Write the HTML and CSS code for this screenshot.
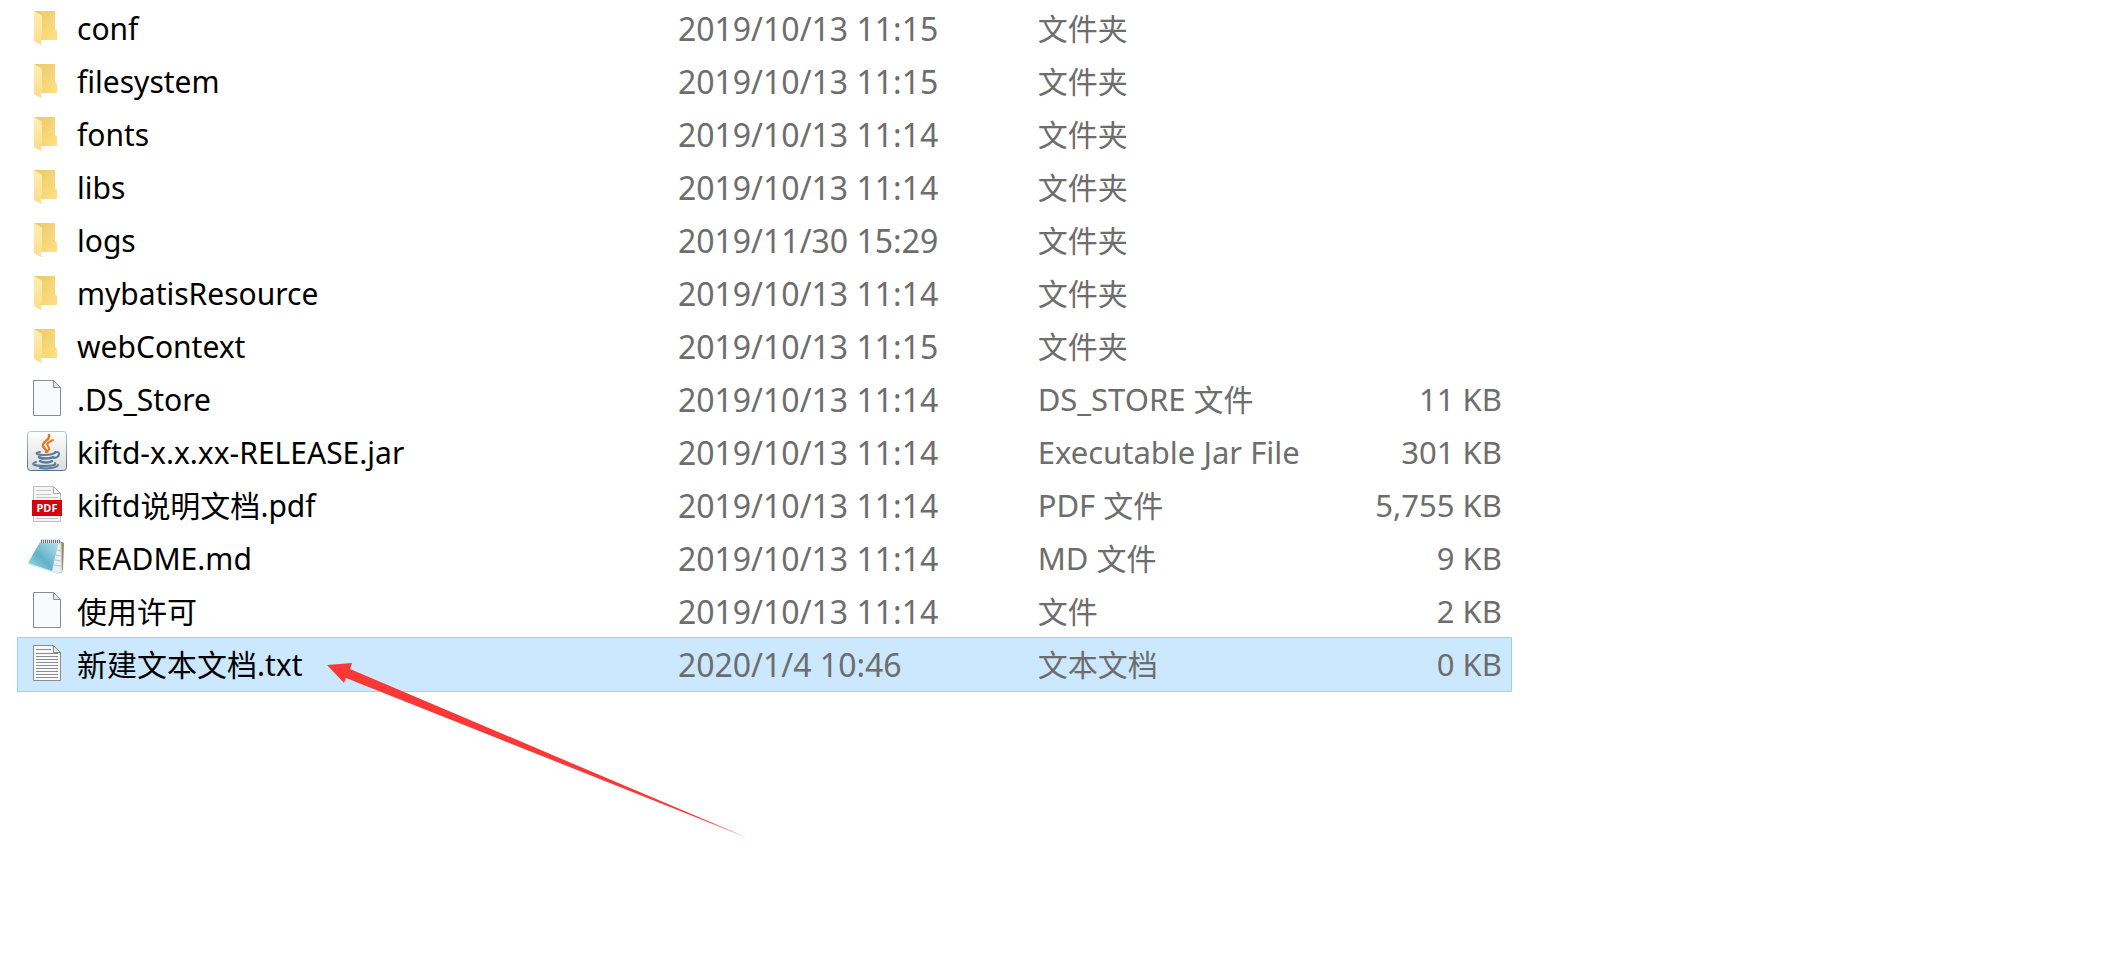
FILE: index.html
```html
<!DOCTYPE html>
<html lang="zh-CN">
<head>
    <meta charset="UTF-8">
    <title>kiftd</title>
    <link rel="stylesheet" href="styles.css">
</head>
<body>
    <!-- 图标定义 -->
    <svg class="icon-defs" aria-hidden="true">
        <defs>
            <linearGradient id="folder-back" x1="0" y1="0" x2="1" y2="1">
                <stop offset="0" stop-color="#e9c866"/>
                <stop offset="1" stop-color="#ffe083"/>
            </linearGradient>
            <linearGradient id="folder-front" x1="0" y1="0" x2="0" y2="1">
                <stop offset="0" stop-color="#ffeeb4"/>
                <stop offset="1" stop-color="#fbdd88"/>
            </linearGradient>
            <linearGradient id="jar-bg" x1="0" y1="0" x2="0" y2="1">
                <stop offset="0" stop-color="#ffffff"/>
                <stop offset="1" stop-color="#dcdcdc"/>
            </linearGradient>
            <linearGradient id="jar-edge" x1="0" y1="0" x2="0" y2="1">
                <stop offset="0" stop-color="#b4c4d2"/>
                <stop offset="1" stop-color="#52708c"/>
            </linearGradient>
            <linearGradient id="pad-cover" x1="0" y1="1" x2="1" y2="0">
                <stop offset="0" stop-color="#a5dce8"/>
                <stop offset="0.45" stop-color="#5fb2c8"/>
                <stop offset="1" stop-color="#b9e2ea"/>
            </linearGradient>
        </defs>
        <symbol id="icon-folder" viewBox="0 0 40 40">
            <path fill="url(#folder-back)" d="M7 4h21v18l2 2v9H14L7 30z"/>
            <path fill="url(#folder-front)" d="M7 4l7 4c1 1 1 1 1 3v18l-1 2v7L7 34z"/>
            <path fill="#f0ede4" d="M14 36l3 2h-3z"/>
        </symbol>
        <symbol id="icon-file" viewBox="0 0 40 40">
            <path fill="#f9fafb" stroke="#8b8b8b" d="M6.500 2.500h20l7 7v28h-27z"/>
            <path fill="#e6e8ea" stroke="#8b8b8b" d="M26.500 2.500v7h7z"/>
        </symbol>
        <symbol id="icon-jar" viewBox="0 0 40 40">
            <rect x="0.500" y="0.500" width="39" height="39" rx="3" fill="url(#jar-bg)" stroke="url(#jar-edge)"/>
            <g fill="none" stroke-linecap="round">
                <path stroke="#e87722" stroke-width="2.500" d="M22 4c2 5-7 6-6 11 1 3 4 3 3 6"/>
                <path stroke="#e87722" stroke-width="2" d="M26 9c-5 2-7 4-5 6 2 3 1 4-1 6"/>
                <path stroke="#5a7c98" stroke-width="2" d="M13 21c-6 1-4 3 5 3 5 0 8-1 10-2M28 21c6-1 5 5-1 6"/>
                <path stroke="#5a7c98" stroke-width="2.500" d="M12 26c2 2 11 2 14 0M13 30c3 2 9 2 12 0"/>
                <path stroke="#5a7c98" stroke-width="2" d="M9 31c-6 2-2 4 8 4 8 0 13-1 11-3M13 37c8 1 17 0 18-3"/>
            </g>
        </symbol>
        <symbol id="icon-notepad" viewBox="0 0 40 40">
            <path fill="#a5824a" d="M33 4l4 2-1 27-4 2z"/>
            <path fill="#e9f0f4" stroke="#b9c5cc" d="M31 6l3 0 1 29-3 1-8-2z"/>
            <path stroke="#b9c5cc" d="M30 13l4 1M29 18l5 1M28 23l6 1M27 28l7 1"/>
            <path fill="#dfe9ee" d="M1 26l1 2 29 9 2-1-8-3z"/>
            <path fill="url(#pad-cover)" d="M13 5l18 1-6 28L1 26z"/>
            <path fill="#dde3e5" d="M14 2h19l1 4-21 0z"/>
            <path stroke="#6d7274" stroke-dasharray="1 1" stroke-width="3" d="M14 4.500h19"/>
        </symbol>
        <symbol id="icon-text" viewBox="0 0 40 40">
            <path fill="#f9fafb" stroke="#8b8b8b" d="M6.500 2.500h20l7 7v28h-27z"/>
            <path fill="#e6e8ea" stroke="#8b8b8b" d="M26.500 2.500v7h7z"/>
            <path stroke="#8b8b8b" d="M9 6.500h15M9 10.500h22M9 13.500h22M9 16.500h22M9 19.500h22M9 22.500h22M9 25.500h22M9 28.500h22M9 31.500h22M9 34.500h22"/>
        </symbol>
    </svg>

    <main class="explorer">
        <table class="file-list">
            <colgroup>
                <col class="col-name">
                <col class="col-date">
                <col class="col-type">
                <col class="col-size">
            </colgroup>
            <tbody>
                <tr>
                    <td><div class="file"><svg class="icon"><use href="#icon-folder"/></svg><span>conf</span></div></td>
                    <td>2019/10/13 11:15</td>
                    <td><span class="zh">文件夹</span></td>
                    <td></td>
                </tr>
                <tr>
                    <td><div class="file"><svg class="icon"><use href="#icon-folder"/></svg><span>filesystem</span></div></td>
                    <td>2019/10/13 11:15</td>
                    <td><span class="zh">文件夹</span></td>
                    <td></td>
                </tr>
                <tr>
                    <td><div class="file"><svg class="icon"><use href="#icon-folder"/></svg><span>fonts</span></div></td>
                    <td>2019/10/13 11:14</td>
                    <td><span class="zh">文件夹</span></td>
                    <td></td>
                </tr>
                <tr>
                    <td><div class="file"><svg class="icon"><use href="#icon-folder"/></svg><span>libs</span></div></td>
                    <td>2019/10/13 11:14</td>
                    <td><span class="zh">文件夹</span></td>
                    <td></td>
                </tr>
                <tr>
                    <td><div class="file"><svg class="icon"><use href="#icon-folder"/></svg><span>logs</span></div></td>
                    <td>2019/11/30 15:29</td>
                    <td><span class="zh">文件夹</span></td>
                    <td></td>
                </tr>
                <tr>
                    <td><div class="file"><svg class="icon"><use href="#icon-folder"/></svg><span>mybatisResource</span></div></td>
                    <td>2019/10/13 11:14</td>
                    <td><span class="zh">文件夹</span></td>
                    <td></td>
                </tr>
                <tr>
                    <td><div class="file"><svg class="icon"><use href="#icon-folder"/></svg><span>webContext</span></div></td>
                    <td>2019/10/13 11:15</td>
                    <td><span class="zh">文件夹</span></td>
                    <td></td>
                </tr>
                <tr>
                    <td><div class="file"><svg class="icon"><use href="#icon-file"/></svg><span>.DS_Store</span></div></td>
                    <td>2019/10/13 11:14</td>
                    <td>DS_STORE <span class="zh">文件</span></td>
                    <td>11 KB</td>
                </tr>
                <tr>
                    <td><div class="file"><svg class="icon"><use href="#icon-jar"/></svg><span>kiftd-x.x.xx-RELEASE.jar</span></div></td>
                    <td>2019/10/13 11:14</td>
                    <td>Executable Jar File</td>
                    <td>301 KB</td>
                </tr>
                <tr>
                    <td>
                        <div class="file">
                            <svg class="icon" viewBox="0 0 40 40">
                                <path fill="#f6f6f6" stroke="#bdbdbd" d="M6.500 2.500h20l7 7v28h-27z"/>
                                <path fill="#fff" stroke="#a8a8a8" d="M26.500 2.500v7h7z"/>
                                <path stroke="#c4c4c4" d="M9 6.500h15M9 10.500h15M9 13.500h22M9 34.500h22"/>
                                <path fill="#d9000d" d="M5 16h30v16H5z"/>
                                <text class="pdf-label" x="20" y="28" text-anchor="middle">PDF</text>
                            </svg>
                            <span>kiftd<span class="zh">说明文档</span>.pdf</span>
                        </div>
                    </td>
                    <td>2019/10/13 11:14</td>
                    <td>PDF <span class="zh">文件</span></td>
                    <td>5,755 KB</td>
                </tr>
                <tr>
                    <td><div class="file"><svg class="icon"><use href="#icon-notepad"/></svg><span>README.md</span></div></td>
                    <td>2019/10/13 11:14</td>
                    <td>MD <span class="zh">文件</span></td>
                    <td>9 KB</td>
                </tr>
                <tr>
                    <td><div class="file"><svg class="icon"><use href="#icon-file"/></svg><span><span class="zh">使用许可</span></span></div></td>
                    <td>2019/10/13 11:14</td>
                    <td><span class="zh">文件</span></td>
                    <td>2 KB</td>
                </tr>
                <tr class="selected">
                    <td><div class="file"><svg class="icon"><use href="#icon-text"/></svg><span><span class="zh">新建文本文档</span>.txt</span></div></td>
                    <td>2020/1/4 10:46</td>
                    <td><span class="zh">文本文档</span></td>
                    <td>0 KB</td>
                </tr>
            </tbody>
        </table>
        <svg class="arrow" viewBox="0 0 422 176" aria-hidden="true">
            <path d="M0 2l25-2-2 6L421 175 19 15l-2 5z"/>
        </svg>
    </main>
</body>
</html>
```

FILE: styles.css
```css
* {
    margin: 0;
    padding: 0;
    box-sizing: border-box;
}

body {
    background: #fff;
    color: #000;
    font-family: "Noto Sans", "Noto Sans CJK SC", sans-serif;
    font-size: 31px;
}

.icon-defs {
    position: absolute;
    width: 0;
    height: 0;
}

.explorer {
    position: relative;
    min-height: 100vh;
    padding: 2px 18px;
}

/* 文件列表 */
.file-list {
    width: 71.5%;
    table-layout: fixed;
    border-collapse: collapse;
}

.col-name {
    width: 43.6%;
}

.col-date {
    width: 24.1%;
}

.col-type {
    width: 16%;
}

.file-list td {
    height: 53px;
    padding: 0 9px;
    line-height: 53px;
    color: #6d6d6d;
    white-space: nowrap;
    vertical-align: top;
}

.file-list td:first-child {
    color: #000;
    font-size: 30px;
}

.file-list td:nth-child(2) {
    font-size: 32px;
}

.file-list td:last-child {
    text-align: right;
}

.file {
    display: flex;
    gap: 10px;
    height: 53px;
}

.icon {
    flex: none;
    width: 40px;
    height: 40px;
    margin-top: 5px;
}

.zh {
    font-family: "Noto Sans CJK SC", sans-serif;
    font-size: 30px;
    line-height: 1;
}

.pdf-label {
    fill: #fff;
    font-family: "Noto Sans", sans-serif;
    font-size: 11px;
    font-weight: bold;
}

/* 选中行 */
.selected {
    background: #cce8ff;
    outline: 1px solid #99d1ff;
}

/* 红色箭头 */
.arrow {
    position: absolute;
    top: 663px;
    left: 327px;
    width: 422px;
    height: 176px;
    fill: #fb3838;
}
```
